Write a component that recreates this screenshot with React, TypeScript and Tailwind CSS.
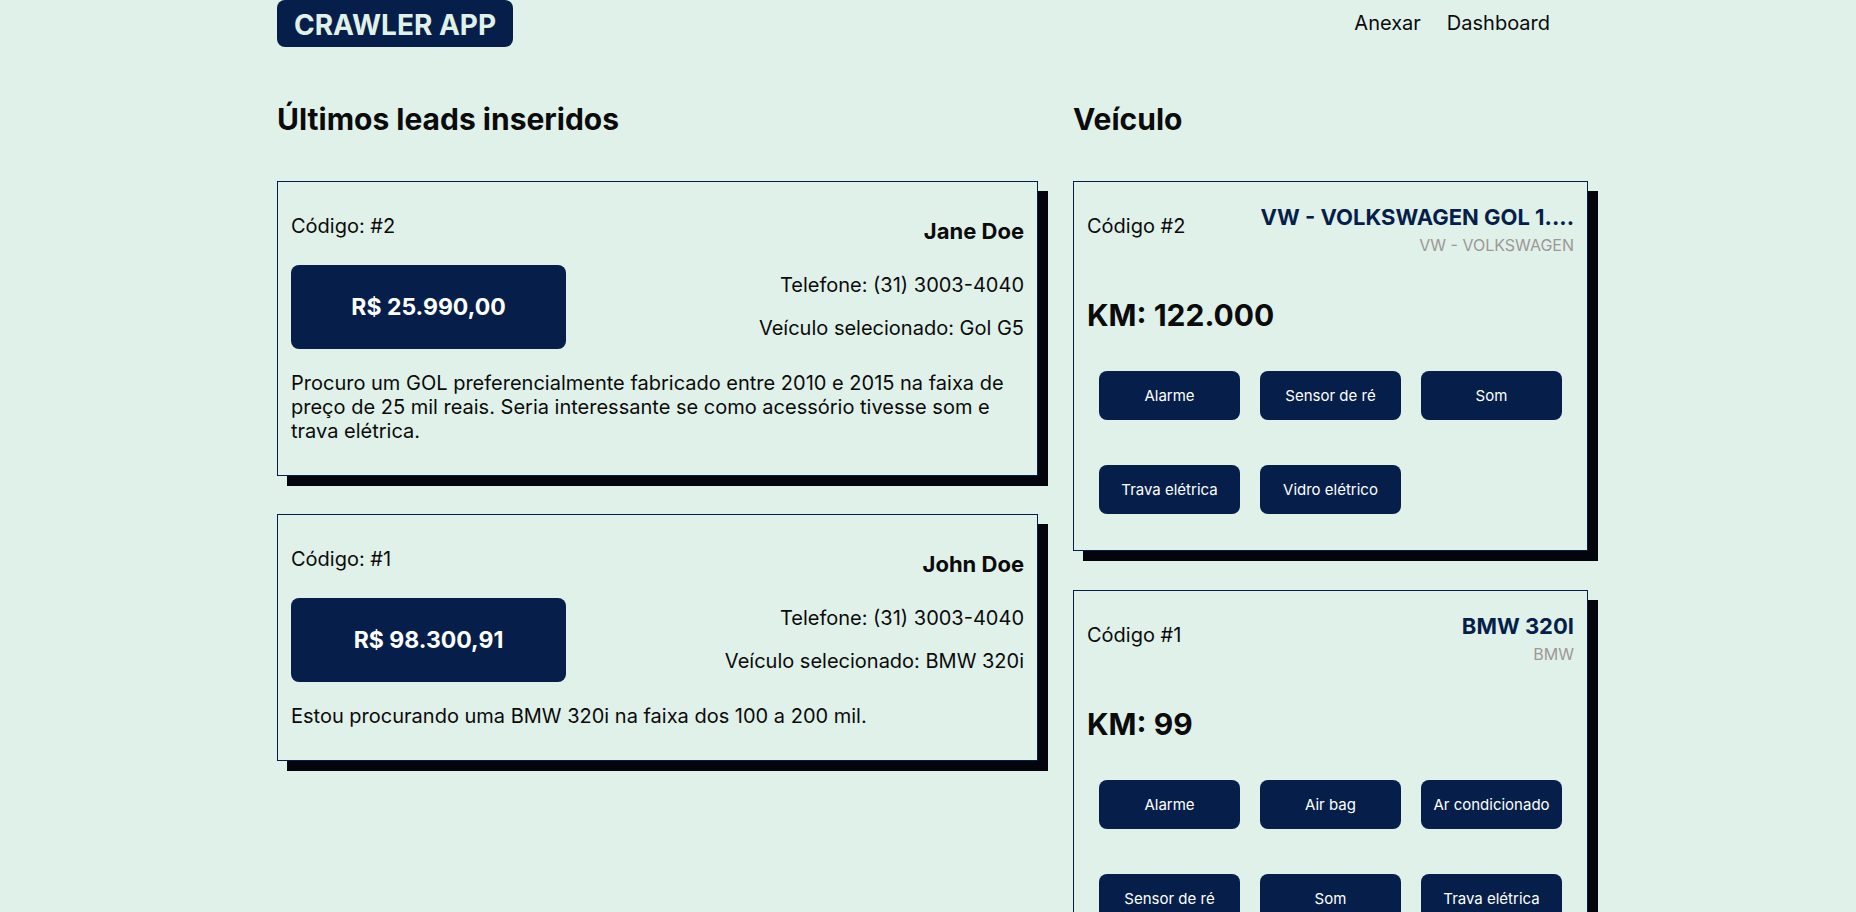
const leads = [
  {
    id: 2,
    name: "Jane Doe",
    price: "R$ 25.990,00",
    phone: "(31) 3003-4040",
    vehicle: "Gol G5",
    message:
      "Procuro um GOL preferencialmente fabricado entre 2010 e 2015 na faixa de preço de 25 mil reais. Seria interessante se como acessório tivesse som e trava elétrica.",
  },
  {
    id: 1,
    name: "John Doe",
    price: "R$ 98.300,91",
    phone: "(31) 3003-4040",
    vehicle: "BMW 320i",
    message: "Estou procurando uma BMW 320i na faixa dos 100 a 200 mil.",
  },
];

const vehicles = [
  {
    id: 2,
    title: "VW - VOLKSWAGEN GOL 1....",
    brand: "VW - VOLKSWAGEN",
    km: "122.000",
    items: ["Alarme", "Sensor de ré", "Som", "Trava elétrica", "Vidro elétrico"],
  },
  {
    id: 1,
    title: "BMW 320I",
    brand: "BMW",
    km: "99",
    items: [
      "Alarme",
      "Air bag",
      "Ar condicionado",
      "Sensor de ré",
      "Som",
      "Trava elétrica",
      "Vidro elétrico",
    ],
  },
];

function LeadCard({ lead }: { lead: (typeof leads)[number] }) {
  return (
    <div className="border border-[#061f4a] px-[13px] pt-[32px] pb-[32px] shadow-[10px_10px_0_#03040c]">
      <div className="flex items-start justify-between">
        <span className="text-[20px]">Código: #{lead.id}</span>
        <h3 className="mt-[4px] text-[22px] font-bold">{lead.name}</h3>
      </div>

      <div className="mt-[21px] flex items-center justify-between">
        <div className="flex h-[84px] w-[275px] items-center justify-center rounded-lg bg-[#061f4a] text-[23px] font-bold text-white">
          {lead.price}
        </div>
        <div className="flex flex-col items-end gap-[19px] pb-[2px] text-[20px]">
          <span>Telefone: {lead.phone}</span>
          <span>Veículo selecionado: {lead.vehicle}</span>
        </div>
      </div>

      <p className="mt-[22px] text-[20px] leading-[24px]">{lead.message}</p>
    </div>
  );
}

function VehicleCard({ vehicle }: { vehicle: (typeof vehicles)[number] }) {
  return (
    <div className="border border-[#061f4a] pt-[22px] pb-[36px] shadow-[10px_10px_0_#03040c]">
      <div className="flex items-start justify-between px-[13px]">
        <span className="mt-[10px] shrink-0 text-[20px]">Código #{vehicle.id}</span>
        <div className="flex min-w-0 flex-col items-end">
          <h3 className="truncate text-[22px] font-bold text-[#061f4a]">{vehicle.title}</h3>
          <span className="mt-[5px] text-[16px] text-[#9d9797]">{vehicle.brand}</span>
        </div>
      </div>

      <p className="mt-[42px] px-[13px] text-[30px] font-bold">KM: {vehicle.km}</p>

      <div className="mt-[38px] grid grid-cols-3 gap-x-[20px] gap-y-[45px] px-[25px]">
        {vehicle.items.map((item) => (
          <button
            key={item}
            className="flex h-[49px] items-center justify-center rounded-lg bg-[#061f4a] text-[15px] text-white"
          >
            {item}
          </button>
        ))}
      </div>
    </div>
  );
}

export default function App() {
  return (
    <div className="min-h-screen bg-[#e0f1e9] font-['Inter',sans-serif] leading-[normal] text-[#0b0b0b]">
      <div className="mx-auto w-[1302px] pb-16">
        {/* Header */}
        <header className="flex items-start justify-between">
          <div className="rounded-lg bg-[#061f4a] px-[17px] pt-[8px] pb-[5px] text-[28px] font-bold text-[#e0f1e9]">
            CRAWLER APP
          </div>
          <nav className="flex gap-[26px] pt-[11px] pr-[29px] text-[20px]">
            <a href="#">Anexar</a>
            <a href="#">Dashboard</a>
          </nav>
        </header>

        <main className="mt-[54px] flex gap-[35px]">
          {/* Leads */}
          <section className="w-[761px] shrink-0">
            <h2 className="mb-[44px] text-[30px] font-bold">Últimos leads inseridos</h2>
            <div className="flex flex-col gap-[38px]">
              {leads.map((lead) => (
                <LeadCard key={lead.id} lead={lead} />
              ))}
            </div>
          </section>

          {/* Vehicles */}
          <section className="w-[515px] shrink-0">
            <h2 className="mb-[44px] text-[30px] font-bold">Veículo</h2>
            <div className="flex flex-col gap-[39px]">
              {vehicles.map((vehicle) => (
                <VehicleCard key={vehicle.id} vehicle={vehicle} />
              ))}
            </div>
          </section>
        </main>
      </div>
    </div>
  );
}
